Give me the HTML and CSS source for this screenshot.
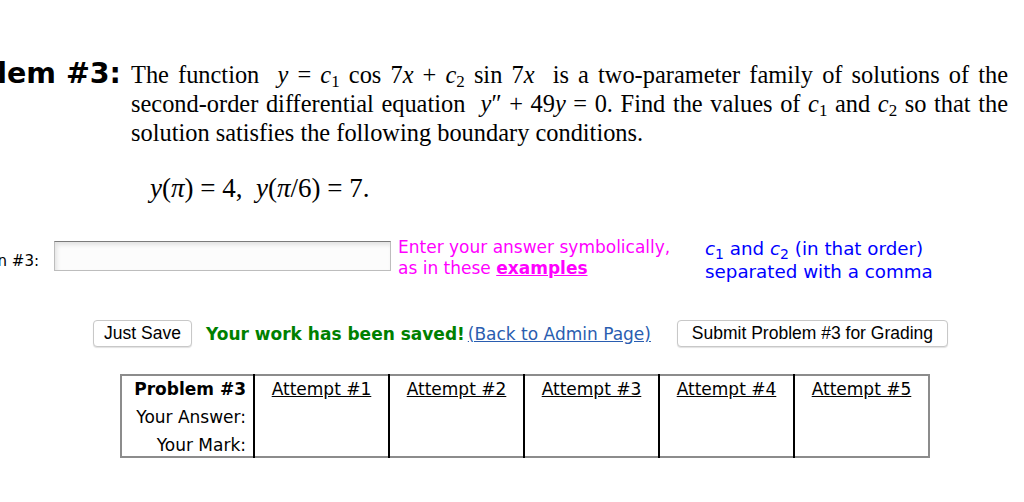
FILE: index.html
```html
<!DOCTYPE html>
<html>
<head>
<meta charset="utf-8">
<link rel="stylesheet" href="styles.css">
</head>
<body>
<div class="page">
  <div class="problem">
    <div class="ptitle"><span>Problem #3:</span></div>
    <div class="ptext">
      <p class="statement"><span class="ln">The function&nbsp; <i>y</i> = <i>c</i><sub>1</sub> cos 7<i>x</i> + <i>c</i><sub>2</sub> sin 7<i>x</i>&nbsp; is a two-parameter family of solutions of the</span><span class="ln">second-order differential equation&nbsp; <i>y</i>&Prime; + 49<i>y</i> = 0. Find the values of <i>c</i><sub>1</sub> and <i>c</i><sub>2</sub> so that the</span><span class="ln last">solution satisfies the following boundary conditions.</span></p>
      <p class="cond"><i>y</i>(<i>&pi;</i>) = 4,&nbsp; <i>y</i>(<i>&pi;</i>/6) = 7.</p>
    </div>
  </div>

  <div class="answer-row">
    <div class="alabel"><span>Question #3:</span></div>
    <input class="ainput" type="text">
    <div class="hint">Enter your answer symbolically,<br>as in these <a href="#" class="ex">examples</a></div>
    <div class="order"><i>c</i><sub>1</sub> and <i>c</i><sub>2</sub> (in that order)<br>separated with a comma</div>
  </div>

  <div class="actions">
    <button class="btn save">Just Save</button>
    <span class="saved">Your work has been saved!</span>
    <a href="#" class="back">(Back to Admin Page)</a>
    <button class="btn submit">Submit Problem #3 for Grading</button>
  </div>

  <table class="attempts">
    <tr class="r1">
      <th class="lead">Problem #3</th>
      <td class="head"><a href="#">Attempt #1</a></td>
      <td class="head"><a href="#">Attempt #2</a></td>
      <td class="head"><a href="#">Attempt #3</a></td>
      <td class="head"><a href="#">Attempt #4</a></td>
      <td class="head"><a href="#">Attempt #5</a></td>
    </tr>
    <tr class="r2">
      <th class="rl">Your Answer:</th>
      <td></td><td></td><td></td><td></td><td></td>
    </tr>
    <tr class="r3">
      <th class="rl">Your Mark:</th>
      <td></td><td></td><td></td><td></td><td></td>
    </tr>
  </table>
</div>
</body>
</html>
```

FILE: styles.css
```css
html, body {
  margin: 0;
  padding: 0;
  background: #fff;
  overflow: hidden;
}
.page {
  width: 1024px;
  height: 502px;
  position: relative;
  overflow: hidden;
  font-family: "DejaVu Sans", Verdana, sans-serif;
  color: #000;
}
.problem {
  display: flex;
  padding-top: 60px;
}
.ptitle {
  width: 121px;
  flex: none;
  display: flex;
  justify-content: flex-end;
  white-space: nowrap;
  font-weight: bold;
  font-size: 28.5px;
  line-height: 28px;
  padding-top: 0;
}
.ptext {
  margin-left: 10px;
  width: 877px;
  font-family: "Liberation Serif", "Times New Roman", serif;
}
.statement {
  margin: 0;
  font-size: 24.4px;
  line-height: 29px;
}
.ln {
  display: block;
  text-align: justify;
  text-align-last: justify;
}
.ln.last {
  text-align-last: left;
}
.statement sub {
  font-size: 17px;
  line-height: 0;
  vertical-align: -4px;
}
.cond {
  margin: 26px 0 0 19px;
  font-size: 27px;
  line-height: 30px;
}
.answer-row {
  display: flex;
  align-items: flex-start;
  margin-top: 38px;
  height: 40px;
}
.alabel {
  width: 39px;
  flex: none;
  display: flex;
  justify-content: flex-end;
  white-space: nowrap;
  font-size: 15px;
  padding-top: 11px;
}
.ainput {
  margin: 0 0 0 15px;
  width: 337px;
  height: 30px;
  box-sizing: border-box;
  border: 1px solid #bdbdbd;
  border-top-color: #7b7b7b;
  box-shadow: inset 2px 3px 4px rgba(0,0,0,0.10);
  background: #fcfcfc;
  padding: 0;
  flex: none;
}
.hint {
  margin-left: 7px;
  color: #ff00ff;
  font-size: 17px;
  line-height: 21px;
  margin-top: -4px;
  width: 300px;
  flex: none;
}
.ex {
  color: #ff00ff;
  font-weight: bold;
}
.order {
  margin-left: 7px;
  color: #0000ff;
  font-size: 18.3px;
  line-height: 23px;
  margin-top: -4px;
  white-space: nowrap;
}
.order sub {
  font-size: 14px;
  line-height: 0;
  vertical-align: -4px;
}
.actions {
  display: flex;
  align-items: center;
  margin-top: 39px;
  padding-left: 93px;
  height: 27px;
}
.btn {
  font-family: "Liberation Sans", Arial, sans-serif;
  font-size: 17.5px;
  height: 27px;
  background: #fff;
  border: 1px solid #c8c8c8;
  border-radius: 4px;
  box-shadow: 0 1px 1px rgba(0,0,0,0.12);
  padding: 0;
  color: #000;
  flex: none;
}
.save {
  width: 99px;
}
.saved {
  margin-left: 14px;
  color: #008000;
  font-weight: bold;
  font-size: 17px;
  white-space: nowrap;
}
.back {
  margin-left: 3px;
  color: #2a5db0;
  font-size: 17px;
  white-space: nowrap;
}
.submit {
  margin-left: 26px;
  width: 271px;
}
.attempts {
  margin: 27px 0 0 120px;
  border-collapse: collapse;
  border: 2px solid #8c8c8c;
  font-size: 17px;
}
.attempts th, .attempts td {
  padding: 0;
  border-left: 2px solid #000;
  white-space: nowrap;
}
.r1 th, .r1 td {
  height: 26px;
}
.r2 th, .r2 td {
  height: 27px;
}
.r3 th, .r3 td {
  height: 27px;
}
.attempts th {
  width: 124px;
  padding-right: 7px;
  text-align: right;
  font-weight: normal;
  border-left: 2px solid #8c8c8c;
}
.r2 th {
  padding-top: 3px;
  height: 24px;
}
.r3 th {
  padding-top: 5px;
  height: 22px;
}
.attempts th.lead {
  font-weight: bold;
}
.attempts td {
  width: 133px;
  text-align: center;
  vertical-align: top;
}
.attempts td.head {
  vertical-align: middle;
}
.attempts td a {
  color: #000;
}
```
